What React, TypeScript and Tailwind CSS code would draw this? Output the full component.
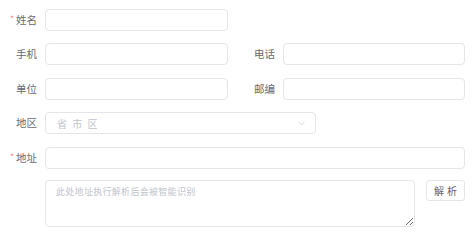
import React from "react";
import { ChevronDown } from "lucide-react";

const font = { fontFamily: '"Noto Sans CJK SC", "Liberation Sans", sans-serif' };

const Label = ({ text, required }: { text: string; required?: boolean }) => (
  <label className="w-[45px] shrink-0 pr-[8px] flex items-center justify-end text-[10.5px] text-[#666a70]">
    {required && <span className="text-[#f56c6c] text-[8px] mr-[2px] -mt-[3px]">*</span>}
    {text}
  </label>
);

const Input = ({ className = "" }: { className?: string }) => (
  <input
    className={`h-[22px] border border-[#e2e5ea] rounded-[4px] bg-white px-[10px] text-[11px] outline-none ${className}`}
  />
);

export default function App() {
  return (
    <div className="w-[474px] h-[241px] bg-white pt-[9px] pr-[9px]" style={font}>
      <div className="flex h-[22px]">
        <Label text="姓名" required />
        <Input className="w-[183px]" />
      </div>

      <div className="flex h-[22px] mt-[12px]">
        <Label text="手机" />
        <Input className="w-[183px]" />
        <div className="w-[10px]" />
        <Label text="电话" />
        <Input className="w-[182px]" />
      </div>

      <div className="flex h-[22px] mt-[13px]">
        <Label text="单位" />
        <Input className="w-[183px]" />
        <div className="w-[10px]" />
        <Label text="邮编" />
        <Input className="w-[182px]" />
      </div>

      <div className="flex h-[22px] mt-[12px]">
        <Label text="地区" />
        <div className="w-[271px] h-[22px] border border-[#e2e5ea] rounded-[4px] flex items-center justify-between pl-[11px] pr-[8px]">
          <span className="text-[10px] text-[#c0c4cc] tracking-[1.5px]">省 市 区</span>
          <ChevronDown className="w-[11px] h-[11px] text-[#c0c4cc]" strokeWidth={1.5} />
        </div>
      </div>

      <div className="flex h-[22px] mt-[13px]">
        <Label text="地址" required />
        <Input className="w-[420px]" />
      </div>

      <div className="flex mt-[11px]">
        <div className="w-[45px] shrink-0" />
        <textarea
          placeholder="此处地址执行解析后会被智能识别"
          className="w-[370px] h-[47px] border border-[#e2e5ea] rounded-[4px] px-[10px] py-[4px] text-[9px] tracking-[0.3px] leading-[14px] outline-none placeholder:text-[#c0c4cc]"
        />
        <div className="w-[11px]" />
        <button className="w-[39px] h-[21px] border border-[#e2e5ea] rounded-[3px] bg-white text-[10px] text-[#606266] tracking-[3px] flex items-center justify-center pl-[3px]">
          解析
        </button>
      </div>
    </div>
  );
}
